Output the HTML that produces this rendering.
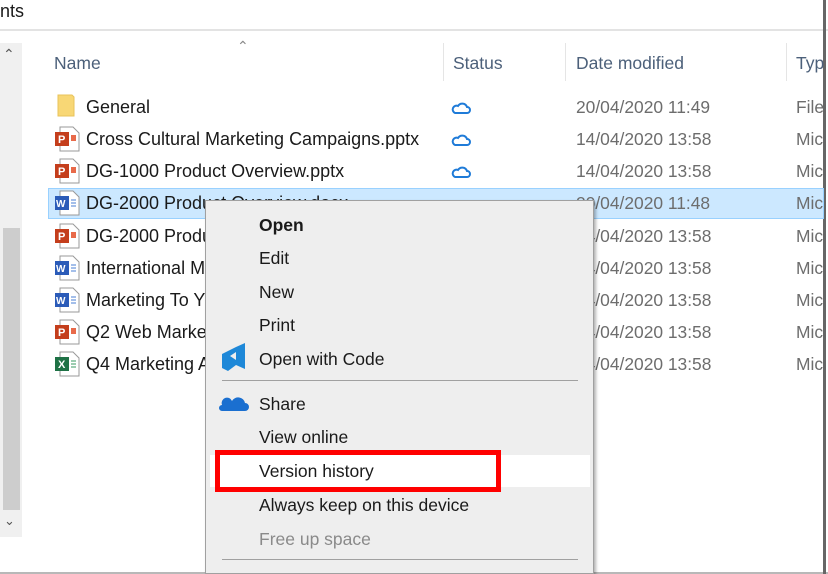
<!DOCTYPE html>
<html><head><meta charset="utf-8"><style>
*{margin:0;padding:0;box-sizing:border-box}
body{width:828px;height:574px;overflow:hidden;background:#fff;font-family:"Liberation Sans",sans-serif;position:relative;color:#1a1a1a}
.a{position:absolute;white-space:nowrap}
.t{font-size:18px}
.h{font-size:17.5px;color:#4c607a}
.d{font-size:17.4px;color:#6d6d6d}
.m{font-size:17.5px;color:#1a1a1a}
</style></head><body>
<div class="a" style="left:0;top:0;width:828px;height:31px;background:#fff;border-bottom:2px solid #e3e3e3"></div>
<div class="a t" style="left:0;top:1px">nts</div>
<div class="a" style="left:0;top:43px;width:22px;height:494px;background:#f0f0f0"></div>
<div class="a" style="left:3px;top:228px;width:17px;height:282px;background:#cdcdcd"></div>
<div class="a" style="left:3px;top:46px;font-size:14px;color:#555">&#8963;</div>
<div class="a" style="left:4px;top:513px;font-size:13px;color:#555">&#8964;</div>
<div class="a" style="left:0;top:572px;width:828px;height:2px;background:#b8b8b8"></div>
<div class="a" style="left:823px;top:0;width:3px;height:574px;background:#666"></div>
<div class="a" style="left:237px;top:38px;font-size:14px;color:#888">&#8963;</div>
<div class="a h" style="left:54px;top:53px">Name</div>
<div class="a" style="left:443px;top:43px;width:1px;height:38px;background:#e5e5e5"></div>
<div class="a h" style="left:453px;top:53px">Status</div>
<div class="a" style="left:565px;top:43px;width:1px;height:38px;background:#e5e5e5"></div>
<div class="a h" style="left:576px;top:53px">Date modified</div>
<div class="a" style="left:786px;top:43px;width:1px;height:38px;background:#e5e5e5"></div>
<div class="a h" style="left:796px;top:53px">Typ</div>
<div class="a" style="left:48px;top:188px;width:776px;height:31px;background:#cce8ff;border:1px solid #99d1ff"></div>
<svg class="a" style="left:0;top:0" width="828" height="574">
<defs>
<g id="doc"><path d="M5 0h13l6 6v18H5z" fill="#fff" stroke="#999"/></g>
</defs>
<path d="M58 95h14l2 2v19H58z" fill="#f8d775" stroke="#e8c35a"/>
<g font-family="Liberation Sans" font-weight="bold" font-size="11" fill="#fff">
<g transform="translate(55,127)"><use href="#doc"/><rect x="0" y="5" width="14" height="14" fill="#c43e1c"/><text x="3" y="16">P</text><rect x="16" y="8" width="5" height="6" fill="#e86a4a"/></g>
<g transform="translate(55,159)"><use href="#doc"/><rect x="0" y="5" width="14" height="14" fill="#c43e1c"/><text x="3" y="16">P</text><rect x="16" y="8" width="5" height="6" fill="#e86a4a"/></g>
<g transform="translate(55,191)"><use href="#doc"/><rect x="0" y="5" width="14" height="14" fill="#2b5bb8"/><text x="1" y="16" font-size="10">W</text><path d="M16 9h5M16 12h5M16 15h5" stroke="#4a7fd6"/></g>
<g transform="translate(55,224)"><use href="#doc"/><rect x="0" y="5" width="14" height="14" fill="#c43e1c"/><text x="3" y="16">P</text><rect x="16" y="8" width="5" height="6" fill="#e86a4a"/></g>
<g transform="translate(55,256)"><use href="#doc"/><rect x="0" y="5" width="14" height="14" fill="#2b5bb8"/><text x="1" y="16" font-size="10">W</text><path d="M16 9h5M16 12h5M16 15h5" stroke="#4a7fd6"/></g>
<g transform="translate(55,288)"><use href="#doc"/><rect x="0" y="5" width="14" height="14" fill="#2b5bb8"/><text x="1" y="16" font-size="10">W</text><path d="M16 9h5M16 12h5M16 15h5" stroke="#4a7fd6"/></g>
<g transform="translate(55,320)"><use href="#doc"/><rect x="0" y="5" width="14" height="14" fill="#c43e1c"/><text x="3" y="16">P</text><rect x="16" y="8" width="5" height="6" fill="#e86a4a"/></g>
<g transform="translate(55,352)"><use href="#doc"/><rect x="0" y="5" width="14" height="14" fill="#1e7145"/><text x="3" y="16">X</text><path d="M16 9h5M16 12h5M16 15h5" stroke="#3a9a60"/></g>
</g>
<g fill="none" stroke="#1f7bd8" stroke-width="2">
<path d="M455 113h12a3 3 0 0 0 0-6a5 5 0 0 0-9-1a3.5 3.5 0 0 0-3 7z"/>
<path d="M455 145h12a3 3 0 0 0 0-6a5 5 0 0 0-9-1a3.5 3.5 0 0 0-3 7z"/>
<path d="M455 177h12a3 3 0 0 0 0-6a5 5 0 0 0-9-1a3.5 3.5 0 0 0-3 7z"/>
</g>
</svg>
<div class="a t" style="left:86px;top:97px">General</div>
<div class="a t" style="left:86px;top:129px">Cross Cultural Marketing Campaigns.pptx</div>
<div class="a t" style="left:86px;top:161px">DG-1000 Product Overview.pptx</div>
<div class="a t" style="left:86px;top:193px">DG-2000 Product Overview.docx</div>
<div class="a t" style="left:86px;top:226px">DG-2000 Product</div>
<div class="a t" style="left:86px;top:258px">International M</div>
<div class="a t" style="left:86px;top:290px">Marketing To Y</div>
<div class="a t" style="left:86px;top:322px">Q2 Web Marke</div>
<div class="a t" style="left:86px;top:354px">Q4 Marketing A</div>
<div class="a d" style="left:576px;top:97px">20/04/2020 11:49</div>
<div class="a d" style="left:576px;top:129px">14/04/2020 13:58</div>
<div class="a d" style="left:576px;top:161px">14/04/2020 13:58</div>
<div class="a d" style="left:576px;top:193px">20/04/2020 11:48</div>
<div class="a d" style="left:576px;top:226px">14/04/2020 13:58</div>
<div class="a d" style="left:576px;top:258px">14/04/2020 13:58</div>
<div class="a d" style="left:576px;top:290px">14/04/2020 13:58</div>
<div class="a d" style="left:576px;top:322px">14/04/2020 13:58</div>
<div class="a d" style="left:576px;top:354px">14/04/2020 13:58</div>
<div class="a d" style="left:796px;top:97px">File</div>
<div class="a d" style="left:796px;top:129px">Mic</div>
<div class="a d" style="left:796px;top:161px">Mic</div>
<div class="a d" style="left:796px;top:193px">Mic</div>
<div class="a d" style="left:796px;top:226px">Mic</div>
<div class="a d" style="left:796px;top:258px">Mic</div>
<div class="a d" style="left:796px;top:290px">Mic</div>
<div class="a d" style="left:796px;top:322px">Mic</div>
<div class="a d" style="left:796px;top:354px">Mic</div>
<div class="a" style="left:205px;top:200px;width:389px;height:374px;background:#eeeeee;border:1px solid #a0a0a0;box-shadow:2px 2px 3px rgba(0,0,0,.3)"></div>
<div class="a" style="left:210px;top:455px;width:380px;height:32px;background:#fff"></div>
<div class="a m" style="left:259px;top:215px;font-weight:bold">Open</div>
<div class="a m" style="left:259px;top:248px">Edit</div>
<div class="a m" style="left:259px;top:282px">New</div>
<div class="a m" style="left:259px;top:315px">Print</div>
<div class="a m" style="left:259px;top:349px">Open with Code</div>
<div class="a" style="left:222px;top:380px;width:356px;height:1px;background:#a0a0a0"></div>
<div class="a m" style="left:259px;top:394px">Share</div>
<div class="a m" style="left:259px;top:427px">View online</div>
<div class="a m" style="left:259px;top:461px">Version history</div>
<div class="a m" style="left:259px;top:495px">Always keep on this device</div>
<div class="a m" style="left:259px;top:529px;color:#8a8a8a">Free up space</div>
<div class="a" style="left:222px;top:559px;width:356px;height:1px;background:#a0a0a0"></div>
<svg class="a" style="left:0;top:0" width="828" height="574">
<path d="M236 347l9 -4v26l-9-4l-8 6l-6-3v-14l6-3z M236 352l-6 4l6 4z" fill="#1e88d8" fill-rule="evenodd"/>
<path d="M222 411h23a4 4 0 0 0 0-8a7 7 0 0 0-13-2a5 5 0 0 0-10 4a3 3 0 0 0 0 6z" fill="#1a6fd0"/>
<rect x="217.5" y="452.5" width="281" height="37" fill="none" stroke="#f00" stroke-width="5"/>
</svg>
</body></html>
